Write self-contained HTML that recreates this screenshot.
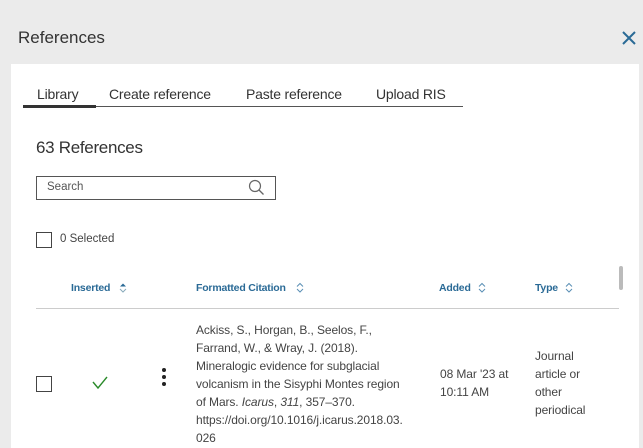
<!DOCTYPE html>
<html><head><meta charset="utf-8"><style>
*{margin:0;padding:0;box-sizing:border-box}
html,body{width:643px;height:448px;overflow:hidden}
body{background:#ebebeb;font-family:"Liberation Sans",sans-serif;color:#333;position:relative}
.a{position:absolute;white-space:nowrap}
.panel{position:absolute;left:11px;top:64px;width:628px;height:384px;background:#fff}
.th{font-size:10.5px;font-weight:bold;color:#2a6a96;letter-spacing:-0.2px}
.cb{position:absolute;width:16px;height:16px;border:1px solid #444;background:#fff}
.cit{font-size:12px;line-height:18px;color:#444;letter-spacing:-0.1px}
</style></head><body>
<div class="a" style="left:18px;top:28px;font-size:17px;color:#333">References</div>
<svg class="a" style="left:621px;top:30px" width="16" height="16" viewBox="0 0 16 16"><path d="M2 2L14 14M14 2L2 14" stroke="#2a6a96" stroke-width="2"/></svg>
<div class="panel"></div>
<div class="a" style="left:37px;top:86px;font-size:14px;letter-spacing:-0.2px">Library</div>
<div class="a" style="left:109px;top:86px;font-size:14px;letter-spacing:-0.2px">Create reference</div>
<div class="a" style="left:246px;top:86px;font-size:14px;letter-spacing:-0.2px">Paste reference</div>
<div class="a" style="left:376px;top:86px;font-size:14px;letter-spacing:-0.2px">Upload RIS</div>
<div class="a" style="left:23px;top:106px;width:440px;height:1px;background:#555"></div>
<div class="a" style="left:23px;top:105px;width:73px;height:3px;background:#333"></div>
<div class="a" style="left:36px;top:138px;font-size:17px;letter-spacing:-0.3px">63 References</div>
<div class="a" style="left:36px;top:176px;width:240px;height:24px;border:1px solid #555"></div>
<div class="a" style="left:47px;top:181px;font-size:11.5px;color:#555">Search</div>
<svg class="a" style="left:248px;top:179px" width="17" height="17" viewBox="0 0 17 17"><circle cx="7" cy="7" r="5.5" fill="none" stroke="#666" stroke-width="1.2"/><path d="M11 11L15.5 15.5" stroke="#666" stroke-width="1.3"/></svg>
<div class="cb" style="left:36px;top:232px"></div>
<div class="a" style="left:60px;top:233px;font-size:11.5px;color:#444">0 Selected</div>
<div class="a th" style="left:71px;top:282px">Inserted</div>
<svg class="a" style="left:119px;top:282px" width="8" height="11" viewBox="0 0 8 11"><path d="M1 4.5L4 1.5L7 4.5Z" fill="#2a6a96"/><path d="M1 7L4 10L7 7" fill="none" stroke="#8ab" stroke-width="1"/></svg>
<div class="a th" style="left:196px;top:282px">Formatted Citation</div>
<div class="a th" style="left:439px;top:282px">Added</div>
<div class="a th" style="left:535px;top:282px">Type</div>
<svg class="a" style="left:296px;top:282px" width="8" height="11" viewBox="0 0 8 11"><path d="M1 4.5L4 1.5L7 4.5M1 7L4 10L7 7" fill="none" stroke="#5a8fb5" stroke-width="1"/></svg>
<svg class="a" style="left:478px;top:282px" width="8" height="11" viewBox="0 0 8 11"><path d="M1 4.5L4 1.5L7 4.5M1 7L4 10L7 7" fill="none" stroke="#5a8fb5" stroke-width="1"/></svg>
<svg class="a" style="left:565px;top:282px" width="8" height="11" viewBox="0 0 8 11"><path d="M1 4.5L4 1.5L7 4.5M1 7L4 10L7 7" fill="none" stroke="#5a8fb5" stroke-width="1"/></svg>
<div class="a" style="left:619px;top:266px;width:4px;height:24px;border-radius:2px;background:#bbb"></div>
<div class="a" style="left:36px;top:308px;width:583px;height:1px;background:#ccc"></div>
<div class="cb" style="left:36px;top:376px"></div>
<svg class="a" style="left:92px;top:376px" width="16" height="14" viewBox="0 0 16 14"><path d="M1 6L6 12L15 1" fill="none" stroke="#2a8a2a" stroke-width="1.4"/></svg>
<svg class="a" style="left:161px;top:367px" width="6" height="20" viewBox="0 0 6 20"><circle cx="3" cy="3" r="2" fill="#222"/><circle cx="3" cy="10" r="2" fill="#222"/><circle cx="3" cy="17" r="2" fill="#222"/></svg>
<div class="a cit" style="left:196px;top:321px">Ackiss, S., Horgan, B., Seelos, F.,<br>Farrand, W., &amp; Wray, J. (2018).<br>Mineralogic evidence for subglacial<br>volcanism in the Sisyphi Montes region<br>of Mars. <i>Icarus</i>, <i>311</i>, 357–370.<br>https://doi.org/10.1016/j.icarus.2018.03.<br>026</div>
<div class="a cit" style="left:440px;top:365px">08 Mar '23 at<br>10:11 AM</div>
<div class="a cit" style="left:535px;top:347px">Journal<br>article or<br>other<br>periodical</div>
</body></html>
